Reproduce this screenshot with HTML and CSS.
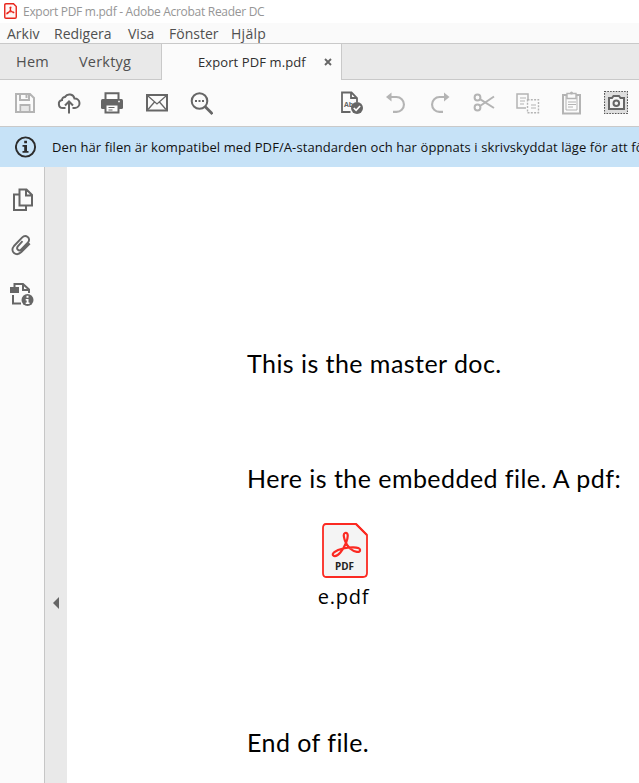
FILE: index.html
```html
<!DOCTYPE html>
<html lang="sv">
<head>
<meta charset="utf-8">
<title>Export PDF m.pdf - Adobe Acrobat Reader DC</title>
<link rel="stylesheet" href="styles.css">
</head>
<body>
<div class="window">
  <header class="titlebar">
    <svg class="app-icon" width="13" height="16" viewBox="0 0 13 16" fill="none" stroke="#e8251c"><path d="M2 .75h7.5l2.75 2.75V14q0 1.2-1.2 1.2H2Q.75 15.2.75 14V2Q.75.75 2 .75z" stroke-width="1.4" fill="#fff6f5"/><path d="M6 4.500q1-1 1 0Q6.500 8 3.700 10.500q-1.500 1-.7-.5Q6 8 9.500 9q1 .8-.3.800Q6.500 8.500 6 4.500z" stroke-width="1.100"/></svg>
    <span class="title">Export PDF m.pdf - Adobe Acrobat Reader DC</span>
  </header>
  <nav class="menubar"><span class="m1">Arkiv</span><span class="m2">Redigera</span><span class="m3">Visa</span><span class="m4">Fönster</span><span class="m5">Hjälp</span></nav>
  <div class="tabs">
    <div class="home-tabs"><span class="home">Hem</span><span class="tools">Verktyg</span></div>
    <div class="doc-tab"><span>Export PDF m.pdf</span><svg width="8" height="8" viewBox="0 0 8 8"><path d="M1 1l6 6M7 1L1 7" stroke="#666" stroke-width="1.900"/></svg></div>
    <div class="tab-rest"></div>
  </div>
  <div class="toolbar">
    <div class="group left">
      <svg class="off" viewBox="0 0 24 24"><path d="M3 3h14l4 4v14H3zM7 3v6h9V3M7.500 21v-7h9v7"/><path d="M13.500 4v3"/><path d="M8.500 15h7v5h-7z" fill="#e7e7e7" stroke="none"/></svg>
      <svg viewBox="0 0 24 24"><path d="M8.500 17H6a4 4 0 0 1-1-7.900 3 3 0 0 1 3-3.200 5.200 5.200 0 0 1 9.500 1.600A4.600 4.600 0 0 1 18 17h-2.500M12 22.500V11M8 14.500l4-4 4 4"/></svg>
      <svg viewBox="1 0 24 24"><path d="M5.500 8V2.200h13V8" fill="#fff"/><path d="M2.500 8h19q1.500 0 1.500 1.500v7q0 1.500-1.500 1.500h-19Q1 18 1 16.500v-7Q1 8 2.500 8z" fill="#666" stroke="none"/><path d="M5.500 13.500h13v8h-13z" fill="#fff"/><path d="M8.500 16.500h6M8.500 19h4" stroke-width="1.200"/><path d="M18 10.500h2" stroke="#ddd" stroke-width="1.300"/></svg>
      <svg viewBox="0 0 24 24"><path d="M2 4h20v15.500H2z" stroke-width="2"/><path d="M3 5l9 8 9-8M3 18.500l6.500-7.500M21 18.500L14.500 11" stroke-width="1.300"/></svg>
      <svg viewBox="-1 0 24 24"><circle cx="9.500" cy="10" r="7.800"/><path d="M15 15.500l7.500 7.500" stroke-width="2.800"/><path d="M5 9h2v2H5zM8.500 9h2v2h-2zM12 9h2v2h-2z" fill="#666" stroke="none"/></svg>
    </div>
    <div class="group right">
      <svg viewBox="0 0 24 24"><path d="M10.500 21H2V1.500h9.500L17 7v4M11 1.500V7h6" stroke-width="1.800"/><text x="4" y="16" class="abc">Abc</text><circle cx="17" cy="17" r="6" fill="#666" stroke="none"/><path d="M13.800 17l2.300 2.300 4-4.300" stroke="#fff" stroke-width="1.700"/></svg>
      <svg class="off" viewBox="0 0 24 24"><path d="M4 6h8.500a7.300 7.300 0 0 1 0 14.900H9" stroke-width="2.100"/><path d="M7.500 1.500L2 6l5.500 4.500z" class="solid"/></svg>
      <svg class="off" viewBox="0 0 24 24"><path d="M19 6h-7.500a7.300 7.300 0 0 0 0 14.900H15" stroke-width="2.100"/><path d="M16 1.500L21.500 6 16 10.500z" class="solid"/></svg>
      <svg class="off" viewBox="0 0 24 24"><circle cx="5.500" cy="6.500" r="2.900"/><circle cx="5.500" cy="16.500" r="2.900"/><path d="M8 8.200L22 17M8 15L22 5.500"/></svg>
      <svg class="off" viewBox="0 0 24 24"><path d="M10 17H1V3h11v5" stroke-width="1.500"/><path d="M4 7h6M4 10h5M4 13h4M15 14h5M15 17h5" stroke-width="1.200"/><path d="M11.500 8.700h11v13h-11z" stroke-width="1.400" stroke-dasharray="2 1.300"/></svg>
      <svg class="off" viewBox="0 0 24 24"><path d="M3 4h17v18.500H3z" stroke-width="2"/><path d="M6 4h11v15H6z" stroke-width="1"/><path d="M7 2.500h9v5H7z" fill="#fbfbfb" stroke-width="1.400"/><circle cx="11.500" cy="2" r="1.500" class="solid"/><path d="M8 11h8M8 13.500h8M8 16h5" stroke-width="1.200"/></svg>
      <svg viewBox="0 0 24 24"><path d="M.5.5h23v22H.5z" fill="#dedede" stroke="#555" stroke-width="1.100" stroke-dasharray="1.600 1.200"/><path d="M5 7h3l1.500-2h5.500l1.500 2h3.500v11H5z" fill="#f4f4f4"/><circle cx="12.300" cy="12.200" r="2.800"/></svg>
    </div>
  </div>
  <div class="notice">
    <svg width="22" height="22" viewBox="0 0 22 22"><circle cx="10.500" cy="11" r="9.600" fill="none" stroke="#2c2c2c" stroke-width="1.900"/><path d="M9.200 4.800H12v2.500H9.200zM7.500 9H12v6h1.500v1.700h-6V15h1.700v-4.300H7.500z" fill="#2c2c2c"/></svg>
    <span>Den här filen är kompatibel med PDF/A-standarden och har öppnats i skrivskyddat läge för att fö</span>
  </div>
  <main class="workspace">
    <aside class="sidebar">
      <svg viewBox="-1 0 24 24"><path d="M8.500 6.500H3V22h12v-3.500M8.500 1.500h7L21 7v10.500H8.500zM15 1.500V7.500h6"/></svg>
      <svg viewBox="0 3 24 24"><path d="M19.800 11.500l-8.500 8.500c-5 5-12-.5-7.300-6l8-8.300c3.700-4 9.500.5 6 4.800l-6.500 6.700c-2.600 2.800-5.800-.3-3.500-3l4.500-5" stroke-width="1.900"/></svg>
      <svg viewBox="0 0 24 24"><path d="M4.500 5V2H13l6 5.500V11M13 2v6h6M3 13v8.500h8"/><path d="M0 5h9v6H0z" fill="#666" stroke="none"/><circle cx="17.500" cy="18" r="6" fill="#666" stroke="none"/><path d="M16.500 13.700h2v2h-2zM15.700 17h2.800v3.500h1V22h-3.800v-1.500h1v-2h-1z" fill="#fff" stroke="none"/></svg>
    </aside>
    <div class="handle"><svg width="6" height="12" viewBox="0 0 6 12"><path d="M6 0v12L0 6z" fill="#666"/></svg></div>
    <article class="page">
      <p class="p1">This is the master doc.</p>
      <p class="p2">Here is the embedded file. A pdf:</p>
      <figure class="attachment">
        <svg width="46" height="55" viewBox="0 0 46 55" fill="none" stroke="#fb2a22"><path d="M4 1h30l11 11v38q0 4-4 4H4q-3 0-3-4V5q0-4 3-4z" fill="#f4f4f4" stroke-width="1.800"/><path d="M34 1l11 11" stroke-width="2"/><path d="M23 10c4-1 3 5 1 10-3 7-8 14-12 13-4-2 2-6 9-7.500 6-1.500 16-2 17 1 1 4-6 2.500-10-1C24 22 19.500 11 23 10z" stroke-width="2.200"/><text x="13" y="47" class="pdf" textLength="19" lengthAdjust="spacingAndGlyphs">PDF</text></svg>
        <figcaption>e.pdf</figcaption>
      </figure>
      <p class="p3">End of file.</p>
    </article>
  </main>
</div>
</body>
</html>
```
FILE: styles.css
```css
* { box-sizing: border-box; }
body { margin: 0; background: #fff; font-family: "Open Sans", "Noto Sans", sans-serif; color: #505050; }
.window { width: 639px; height: 783px; overflow: hidden; display: flex; flex-direction: column; white-space: nowrap; }
svg { display: block; flex: none; }
.titlebar { height: 23px; flex: none; display: flex; align-items: flex-start; padding: 3px 0 0 4px; }
.title { margin-left: 6px; font-size: 12px; line-height: 18px; letter-spacing: -0.29px; color: #969696; }
.menubar { height: 21px; flex: none; display: flex; padding-left: 7px; font-size: 14px; line-height: 21px; letter-spacing: 0; background: #fafafa; border-bottom: 1px solid #c9c9c9; }
.m1 { width: 47px; }
.m2 { width: 74px; }
.m3 { width: 41px; }
.m4 { width: 62px; }
.m5 { letter-spacing: 0.3px; }
.tabs { height: 36px; flex: none; display: flex; background: #e9e9e9; }
.home-tabs { width: 162px; display: flex; padding-left: 16px; line-height: 36px; font-size: 14.5px; letter-spacing: 0.2px; border-right: 1px solid #c9c9c9; border-bottom: 1px solid #c9c9c9; }
.home { width: 63px; }
.doc-tab { width: 180px; display: flex; align-items: center; justify-content: space-between; padding: 0 9px 0 36px; font-size: 13px; letter-spacing: 0.1px; color: #2f2f2f; background: #fbfbfb; border-right: 1px solid #c9c9c9; }
.tab-rest { flex: 1; border-bottom: 1px solid #c9c9c9; }
.toolbar { height: 47px; flex: none; display: flex; padding: 11px 0 0 13px; background: #fbfbfb; border-bottom: 1px solid #c9c9c9; }
.group { display: flex; gap: 20px; }
.left { width: 327px; }
.toolbar svg, .sidebar svg { width: 24px; height: 24px; fill: none; stroke: #666; stroke-width: 2; }
.toolbar .off { stroke: #b4b4b4; }
.toolbar .solid { fill: #b4b4b4; stroke: none; }
.abc { font: bold 7px "Open Sans", sans-serif; fill: #666; stroke: none; }
.notice { height: 40px; flex: none; display: flex; align-items: center; gap: 15px; padding-left: 15px; font-size: 13px; letter-spacing: 0.09px; color: #111; background: #c6e2f7; }
.workspace { flex: 1; display: flex; min-height: 0; }
.sidebar { width: 45px; padding: 21px 0 0 10px; display: flex; flex-direction: column; gap: 23px; background: #fbfbfb; border-right: 1px solid #c6c6c6; }
.sidebar svg { overflow: visible; }
.handle { width: 22px; padding: 430px 0 0 8px; background: #e9e9e9; }
.page { flex: 1; padding: 179px 0 0 180px; font-family: Lato, sans-serif; font-size: 25px; letter-spacing: 0.45px; color: #000; }
p { margin: 0; line-height: 34px; }
.p1 { margin-bottom: 81px; }
.p2 { margin-bottom: 28px; }
.attachment { width: 60px; margin: 0 0 0 68px; display: flex; flex-direction: column; align-items: center; }
figcaption { margin: 4px 3px 0 0; line-height: 30px; font-family: "Open Sans", sans-serif; font-size: 20px; letter-spacing: 0.8px; }
.p3 { margin-top: 113px; }
.pdf { font: bold 11px "Open Sans", sans-serif; letter-spacing: 0; fill: #222; stroke: none; }
```
